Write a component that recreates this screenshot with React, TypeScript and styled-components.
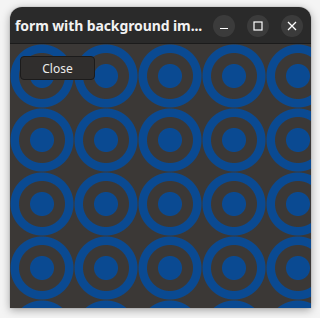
import React from 'react';
import styled, {createGlobalStyle} from 'styled-components';

const Global = createGlobalStyle`
  html, body {
    margin: 0;
    padding: 0;
    background: #f4f4f4;
    width: 320px;
    height: 318px;
    overflow: hidden;
  }
`

const Page = styled.div`
  padding: 7px 9px 10px 10px;
`

const Window = styled.div`
  width: 301px;
  height: 301px;
  border-radius: 12px 12px 0 0;
  overflow: hidden;
  display: flex;
  flex-direction: column;
  box-shadow: 0 2px 8px rgba(0, 0, 0, 0.35), 0 0 1px rgba(0, 0, 0, 0.5);
`

const TitleBar = styled.div`
  height: 37px;
  flex: none;
  background: #2a2a2a;
  border-bottom: 1px solid #1b1b1b;
  box-sizing: border-box;
  display: flex;
  align-items: center;
  justify-content: space-between;
  padding: 0 8px 0 5px;
`

const Title = styled.div`
  color: #f2f2f2;
  font-family: "Noto Sans", sans-serif;
  font-weight: 700;
  font-size: 14px;
  letter-spacing: -0.1px;
  white-space: nowrap;
  padding-top: 1px;
`

const Controls = styled.div`
  display: flex;
  gap: 12px;
  margin-top: 1px;
`

const CtlButton = styled.div`
  width: 22px;
  height: 22px;
  border-radius: 50%;
  background: #3b3b3b;
  display: flex;
  align-items: center;
  justify-content: center;
`

const Content = styled.div`
  flex: 1;
  background-color: #3b3836;
  background-image: radial-gradient(circle at 32px 32px,
    #0a4a92 0 11.5px,
    transparent 12.5px 22.5px,
    #0a4a92 23.5px 31px,
    transparent 32px);
  background-size: 64px 64px;
  padding: 12px 10px;
`

const Button = styled.button`
  width: 75px;
  height: 24px;
  background: #302e2d;
  border: 1px solid #1c1b1b;
  border-radius: 4px;
  color: #ececec;
  font-family: "Noto Sans", sans-serif;
  font-size: 12px;
  padding: 0;
  box-sizing: border-box;
`

export default function App() {
  return (
    <>
      <Global/>
      <Page>
        <Window>
          <TitleBar>
            <Title>form with background im...</Title>
            <Controls>
              <CtlButton>
                <svg width="10" height="10" viewBox="0 0 10 10">
                  <path d="M1 7.5h8" stroke="#fff" strokeWidth="1.2"/>
                </svg>
              </CtlButton>
              <CtlButton>
                <svg width="10" height="10" viewBox="0 0 10 10">
                  <rect x="1" y="1" width="8" height="8" fill="none" stroke="#fff" strokeWidth="1.2"/>
                </svg>
              </CtlButton>
              <CtlButton>
                <svg width="10" height="10" viewBox="0 0 10 10">
                  <path d="M1 1l8 8M9 1l-8 8" stroke="#fff" strokeWidth="1.3"/>
                </svg>
              </CtlButton>
            </Controls>
          </TitleBar>
          <Content>
            <Button>Close</Button>
          </Content>
        </Window>
      </Page>
    </>
  );
}
